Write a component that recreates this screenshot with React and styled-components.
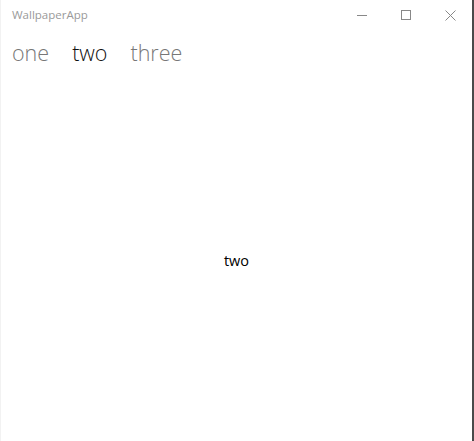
import React, { useState } from 'react';
import styled, { createGlobalStyle } from 'styled-components';

const GlobalStyle = createGlobalStyle`
  html, body, #root {
    margin: 0;
    padding: 0;
    height: 100%;
  }
  body {
    background: #fff;
    font-family: "Segoe UI", "Open Sans", "Noto Sans", sans-serif;
  }
`;

const Window = styled.div`
  width: 100vw;
  height: 100vh;
  box-sizing: border-box;
  border-left: 1px solid #f2f2f2;
  border-right: 2px solid #4a4a4a;
  display: flex;
  flex-flow: column nowrap;
  background: #fff;
`;

const TitleBar = styled.div`
  height: 32px;
  flex-shrink: 0;
  display: flex;
  flex-flow: row nowrap;
  justify-content: space-between;
  align-items: center;
`;

const Title = styled.span`
  padding-left: 11px;
  font-size: 11.5px;
  color: #9a9a9a;
  font-family: "Open Sans", sans-serif;
  margin-top: -3px;
`;

const Controls = styled.div`
  display: flex;
  flex-flow: row nowrap;
  height: 100%;
`;

const ControlButton = styled.div`
  width: 44px;
  height: 100%;
  display: flex;
  justify-content: center;
  align-items: center;
  padding-bottom: 2px;
  box-sizing: border-box;
`;

const PivotHeader = styled.div`
  display: flex;
  flex-flow: row nowrap;
  align-items: flex-start;
  gap: 23px;
  padding: 6px 0 0 11px;
  height: 47px;
  box-sizing: border-box;
  flex-shrink: 0;
`;

const PivotItem = styled.span`
  font-size: 21.5px;
  line-height: 30px;
  font-weight: 300;
  color: ${p => (p.active ? '#111' : '#777')};
  cursor: pointer;
`;

const Content = styled.div`
  flex: 1;
  display: flex;
  justify-content: center;
  align-items: center;
`;

const ContentText = styled.span`
  font-size: 14.5px;
  color: #000;
`;

const Minimize = () => (
  <svg width="10" height="10" viewBox="0 0 10 10">
    <path d="M0 5.5h10" stroke="#888" strokeWidth="1" />
  </svg>
);

const Maximize = () => (
  <svg width="10" height="10" viewBox="0 0 10 10">
    <rect x="0.5" y="0.5" width="9" height="9" fill="none" stroke="#888" strokeWidth="1" />
  </svg>
);

const Close = () => (
  <svg width="11" height="11" viewBox="0 0 11 11">
    <path d="M0.5 0.5l10 10M10.5 0.5l-10 10" stroke="#888" strokeWidth="1" />
  </svg>
);

const tabs = ['one', 'two', 'three'];

const App = () => {
  const [current, setCurrent] = useState('two');
  return (
    <>
      <GlobalStyle />
      <Window>
        <TitleBar>
          <Title>WallpaperApp</Title>
          <Controls>
            <ControlButton><Minimize /></ControlButton>
            <ControlButton><Maximize /></ControlButton>
            <ControlButton><Close /></ControlButton>
          </Controls>
        </TitleBar>
        <PivotHeader>
          {tabs.map(t => (
            <PivotItem key={t} active={t === current} onClick={() => setCurrent(t)}>
              {t}
            </PivotItem>
          ))}
        </PivotHeader>
        <Content>
          <ContentText>{current}</ContentText>
        </Content>
      </Window>
    </>
  );
};

export default App;
